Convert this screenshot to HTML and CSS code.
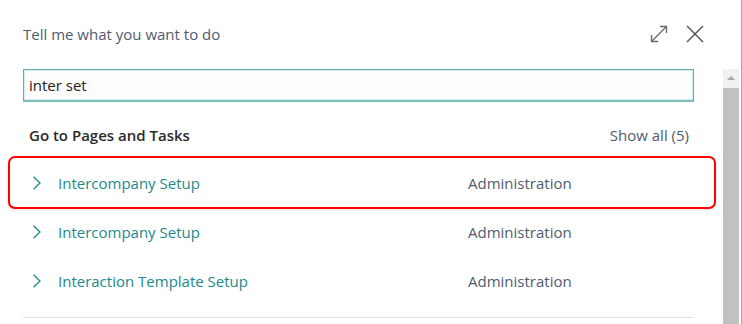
FILE: index.html
```html
<!DOCTYPE html>
<html lang="en">
<head>
    <meta charset="UTF-8">
    <title>Tell me what you want to do</title>
    <link rel="stylesheet" href="styles.css">
</head>
<body>
    <div class="dialog">
        <div class="content">
            <div class="header">
                <h1 class="title">Tell me what you want to do</h1>
                <div class="header-actions">
                    <button class="icon-btn" title="Expand">
                        <svg width="18" height="18" viewBox="0 0 18 18" fill="none" stroke="#666" stroke-width="1.3">
                            <path d="M1.5 16.5 L16.5 1.5"/>
                            <path d="M10 1.5 H16.5 V8"/>
                            <path d="M1.5 10 V16.5 H8"/>
                        </svg>
                    </button>
                    <button class="icon-btn" title="Close">
                        <svg width="18" height="18" viewBox="0 0 18 18" fill="none" stroke="#555" stroke-width="1.5">
                            <path d="M1 1 L17 17"/>
                            <path d="M17 1 L1 17"/>
                        </svg>
                    </button>
                </div>
            </div>

            <div class="search">
                <input type="text" class="search-input" value="inter set">
            </div>

            <div class="section-head">
                <span class="section-title">Go to Pages and Tasks</span>
                <a class="show-all">Show all (5)</a>
            </div>

            <ul class="results">
                <li class="result selected">
                    <span class="chevron"><svg width="10" height="14" viewBox="0 0 10 14" fill="none" stroke="currentColor" stroke-width="1.3"><path d="M1.5 0.8 L8 7 L1.5 13.2"/></svg></span>
                    <span class="result-name">Intercompany Setup</span>
                    <span class="result-area">Administration</span>
                </li>
                <li class="result">
                    <span class="chevron"><svg width="10" height="14" viewBox="0 0 10 14" fill="none" stroke="currentColor" stroke-width="1.3"><path d="M1.5 0.8 L8 7 L1.5 13.2"/></svg></span>
                    <span class="result-name">Intercompany Setup</span>
                    <span class="result-area">Administration</span>
                </li>
                <li class="result">
                    <span class="chevron"><svg width="10" height="14" viewBox="0 0 10 14" fill="none" stroke="currentColor" stroke-width="1.3"><path d="M1.5 0.8 L8 7 L1.5 13.2"/></svg></span>
                    <span class="result-name">Interaction Template Setup</span>
                    <span class="result-area">Administration</span>
                </li>
            </ul>

            <div class="separator"></div>
        </div>

        <div class="scrollbar">
            <div class="scroll-up"></div>
            <div class="scroll-thumb"></div>
        </div>
        <div class="edge"></div>
    </div>
</body>
</html>
```

FILE: styles.css
```css
body {
    margin: 0;
    background-color: #fff;
    font-family: 'Segoe UI', 'Open Sans', sans-serif;
    font-size: 15px;
    color: #212121;
    overflow: hidden;
}

.dialog {
    display: flex;
    height: 324px;
}

.content {
    width: 717px;
    flex-shrink: 0;
}

.header {
    display: flex;
    justify-content: space-between;
    align-items: center;
    height: 69px;
    padding: 0 13px 0 23px;
}

.title {
    margin: 0;
    font-size: 15px;
    font-weight: normal;
    color: #505c6d;
    padding-bottom: 1px;
}

.header-actions {
    display: flex;
    gap: 18px;
    padding-bottom: 1px;
}

.icon-btn {
    border: none;
    background: none;
    padding: 0;
    width: 18px;
    height: 18px;
    display: flex;
    cursor: pointer;
}

.search {
    padding: 0 23px;
}

.search-input {
    box-sizing: border-box;
    width: 100%;
    height: 33px;
    margin: 0;
    padding: 0 5px;
    border: 1px solid #62adad;
    border-bottom: 2px solid #7dbfbf;
    border-radius: 0;
    background-color: #fdfdfd;
    box-shadow: inset 0 0 0 1px #d5ecec;
    font-family: inherit;
    font-size: 15px;
    color: #212121;
    outline: none;
}

.section-head {
    display: flex;
    justify-content: space-between;
    align-items: center;
    height: 56px;
    padding: 0 28px 0 29px;
}

.section-title {
    font-weight: 600;
    color: #2a2a2a;
    padding-top: 10px;
}

.show-all {
    color: #505c6d;
    padding-top: 10px;
    cursor: pointer;
}

.results {
    list-style: none;
    margin: 0;
    padding: 0 3px 0 10px;
}

.result {
    display: flex;
    align-items: center;
    height: 49px;
    padding-left: 22px;
    border-radius: 5px;
    cursor: pointer;
}

.result.selected {
    box-shadow: 0 0 0 2px #ff0000, 0 1px 5px 1px rgba(0, 0, 0, 0.18);
}

.chevron {
    display: flex;
    color: #1b8a8c;
    width: 26px;
}

.result-name {
    width: 410px;
    color: #1b8a8c;
}

.result-area {
    color: #505c6d;
}

.separator {
    height: 1px;
    margin: 12px 23px 0;
    background-color: #e1e1e1;
}

.scrollbar {
    width: 16px;
    margin-left: 6px;
    margin-top: 69px;
    display: flex;
    flex-direction: column;
}

.scroll-up {
    height: 19px;
    background-color: #f1f1f1;
    position: relative;
}

.scroll-up::after {
    content: '';
    position: absolute;
    left: 4px;
    top: 7px;
    border-left: 4px solid transparent;
    border-right: 4px solid transparent;
    border-bottom: 4px solid #a3a3a3;
}

.scroll-thumb {
    flex: 1;
    background-color: #c1c1c1;
}

.edge {
    width: 1px;
    margin-left: 2px;
    background-color: #a8a8a8;
}
```
